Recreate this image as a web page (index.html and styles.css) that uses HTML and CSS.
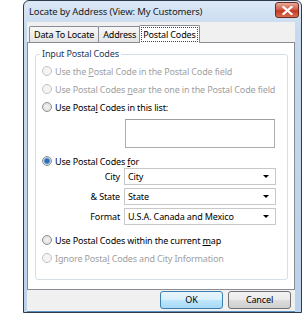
FILE: index.html
```html
<!DOCTYPE html>
<html lang="en">

<head>
    <meta charset="UTF-8">
    <title>Locate by Address</title>
    <link rel="stylesheet" href="styles.css">
</head>

<body>
    <div class="window">
        <div class="titlebar">
            <span class="title">Locate by Address (View: My Customers)</span>
            <span class="close">
                <svg width="11" height="9" viewBox="0 0 11 9">
                    <path d="M1.5 1 L9.5 8 M9.5 1 L1.5 8" stroke="#fff" stroke-width="2.2" stroke-linecap="square" />
                </svg>
            </span>
        </div>
        <div class="client">
            <div class="tabs">
                <span class="tab">Data To Locate</span>
                <span class="tab">Address</span>
                <span class="tab active"><span class="focus">Postal Codes</span></span>
            </div>
            <div class="panel">
                <div class="group">
                    <div class="legend">Input Postal Codes</div>
                    <div class="opt off"><span class="radio"></span><span>Use the <u>P</u>ostal Code in the Postal Code field</span></div>
                    <div class="opt off"><span class="radio"></span><span>Use Postal Codes <u>n</u>ear the one in the Postal Code field</span></div>
                    <div class="opt on"><span class="radio"></span><span>Use Posta<u>l</u> Codes in this list:</span></div>
                    <div class="listbox"></div>
                    <div class="opt on"><span class="radio checked"></span><span>Use Postal Codes <u>f</u>or</span></div>
                    <div class="fields">
                        <span class="lbl">City</span>
                        <span class="select">City</span>
                        <span class="lbl">&amp; State</span>
                        <span class="select">State</span>
                        <span class="lbl">Format</span>
                        <span class="select">U.S.A. Canada and Mexico</span>
                    </div>
                    <div class="opt on"><span class="radio"></span><span>Use Postal Codes within the current <u>m</u>ap</span></div>
                    <div class="opt off"><span class="radio"></span><span>Ignore Posta<u>l</u> Codes and City Information</span></div>
                </div>
            </div>
            <div class="buttons">
                <span class="btn default">OK</span>
                <span class="btn">Cancel</span>
            </div>
        </div>
    </div>
</body>

</html>
```

FILE: styles.css
```css
body {
    margin: 0;
    background: white;
    font-family: "Noto Sans", "Open Sans", sans-serif;
    font-size: 9px;
    letter-spacing: -0.15px;
    color: #000;
}

.window {
    margin-left: 23px;
    width: 277px;
    height: 311px;
    border: 1px solid #2c3a4a;
    border-radius: 6px 6px 0 0;
    background: linear-gradient(#dbe8f6, #c6d9ee 30px, #bcd2ea);
    display: flex;
    flex-direction: column;
}

.titlebar {
    height: 21px;
    display: flex;
    align-items: center;
    justify-content: space-between;
    padding: 0 2px 0 5px;
}

.title {
    font-size: 9.5px;
    color: #1a1a1a;
}

.close {
    width: 22px;
    height: 14px;
    margin-top: -3px;
    border: 1px solid #6b2a20;
    border-radius: 3px;
    background: linear-gradient(#e9a99b, #d0573f 50%, #c0381f 55%, #d96d4f);
    display: flex;
    align-items: center;
    justify-content: center;
}

.client {
    flex: 1;
    margin: 0 6px 0 3px;
    background: #f0f0f0;
    border-bottom: 1px solid #5b8fbf;
    display: flex;
    flex-direction: column;
}

.tabs {
    display: flex;
    align-items: flex-end;
    height: 20px;
    padding-left: 2px;
}

.tab {
    height: 15px;
    line-height: 15px;
    padding: 0 4px;
    border: 1px solid #898c95;
    border-bottom: none;
    margin-right: -1px;
    background: linear-gradient(#f7f7f7, #e4e4e4);
    border-radius: 2px 2px 0 0;
}

.tab.active {
    height: 17px;
    line-height: 17px;
    margin: 0 0 -1px -1px;
    padding: 0 2px;
    background: white;
    position: relative;
}

.focus {
    outline: 1px dotted #444;
    padding: 0 1px;
}

.panel {
    height: 241px;
    border: 1px solid #898c95;
    background: white;
    padding: 5px 6px 0 7px;
}

.group {
    height: 224px;
    margin-top: 6px;
    border: 1px solid #d5dfe5;
    border-radius: 3px;
    padding: 0 6px 0 6px;
}

.legend {
    margin: -7px 0 0 -2px;
    padding: 0 2px;
    background: white;
    width: max-content;
    color: #1e395b;
    line-height: 12px;
}

.opt {
    display: flex;
    align-items: center;
    gap: 3px;
    height: 18px;
}

.opt:nth-child(2) {
    margin-top: 2px;
}

.off {
    color: #a0a0a0;
}

.radio {
    width: 8px;
    height: 8px;
    border: 1px solid #8f8f8f;
    border-radius: 50%;
    background: radial-gradient(circle, #f4f4f4, #d8d8d8);
}

.off .radio {
    border-color: #c4c4c4;
    background: #f4f4f4;
}

.radio.checked {
    background: radial-gradient(circle, #2c6fb6 0 2px, #8db4dc 3px, #eaeaea 4px);
}

.listbox {
    margin: 3px 0 4px 83px;
    width: 148px;
    height: 27px;
    border: 1px solid #abadb3;
    border-top-color: #a0a0a0;
}

.fields {
    display: grid;
    grid-template-columns: 78px 152px;
    column-gap: 4px;
    row-gap: 3px;
    align-items: center;
    margin: -2px 0 6px 0;
}

.lbl {
    text-align: right;
}

.select {
    height: 15px;
    line-height: 15px;
    padding: 0 3px;
    border: 1px solid #c8c8c8;
    position: relative;
}

.select::after {
    content: "";
    position: absolute;
    right: 6px;
    top: 6px;
    border: 3px solid transparent;
    border-top: 3px solid #000;
    border-bottom: none;
}

.buttons {
    flex: 1;
    display: flex;
    justify-content: flex-end;
    align-items: center;
    gap: 5px;
    padding: 0 4px 2px 0;
}

.btn {
    width: 61px;
    height: 16px;
    line-height: 16px;
    text-align: center;
    border: 1px solid #707070;
    border-radius: 3px;
    background: linear-gradient(#f2f2f2, #ebebeb 50%, #dddddd 51%, #cfcfcf);
}

.btn.default {
    border-color: #3c7fb1;
    background: linear-gradient(#eaf6fd, #d9f0fc 50%, #bee6fd 51%, #a7d9f5);
}
```
